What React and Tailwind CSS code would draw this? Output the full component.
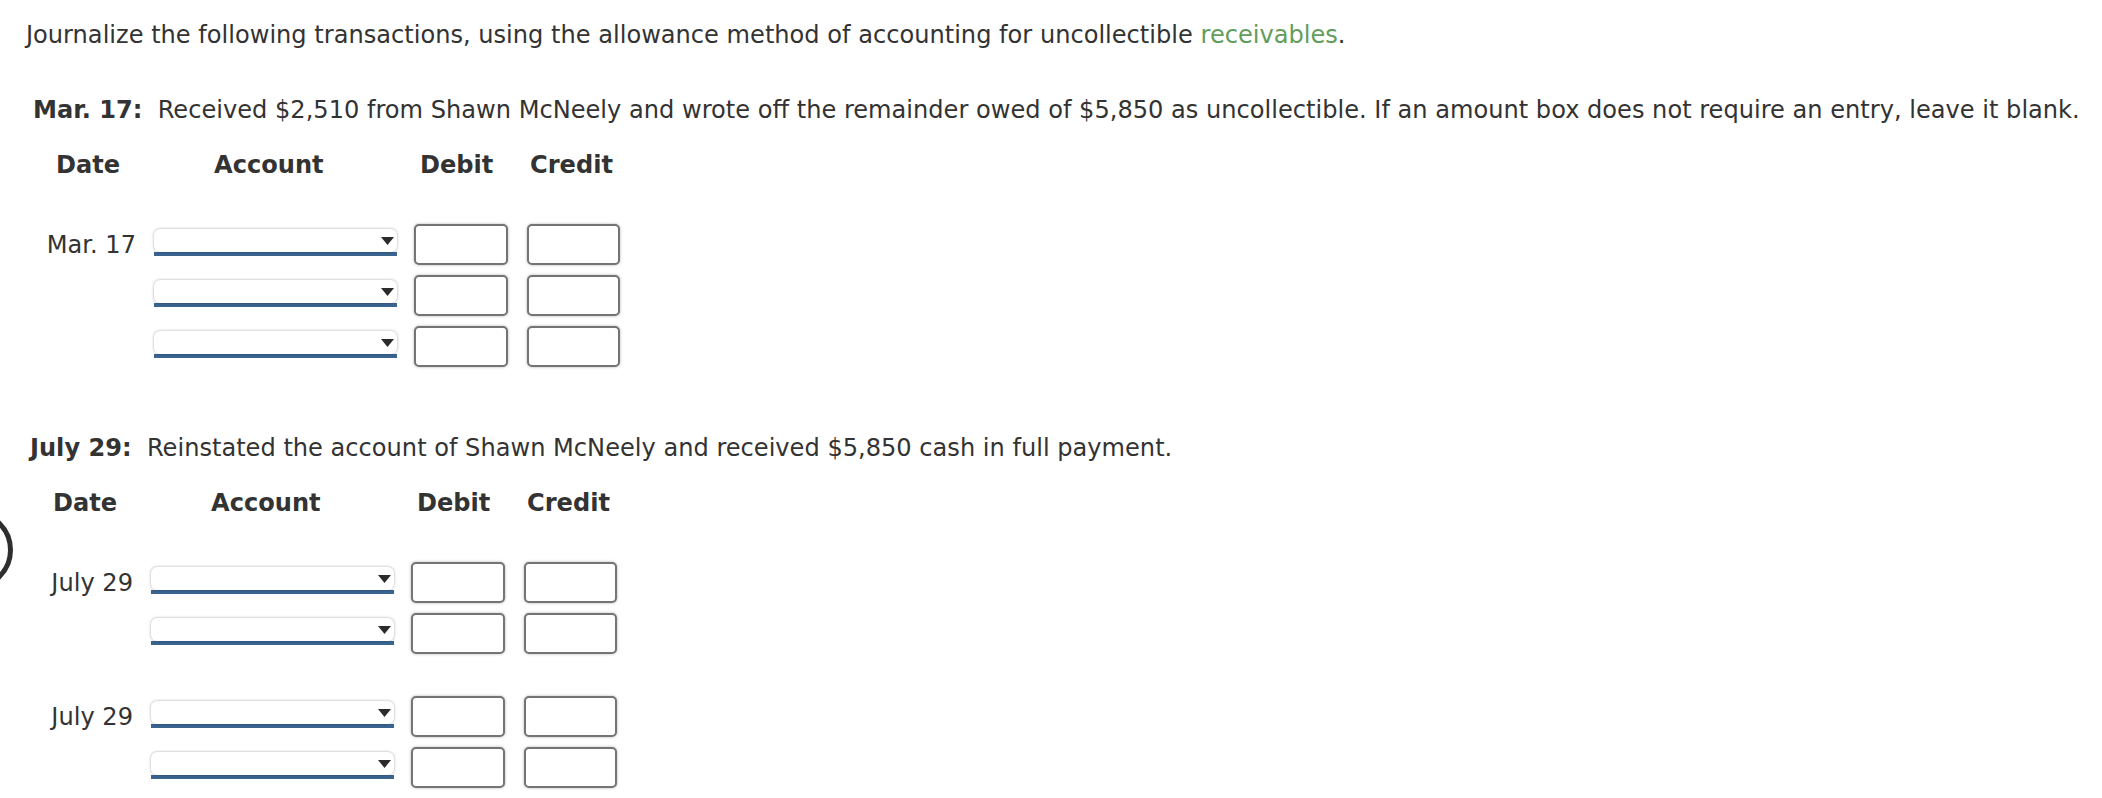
import React from 'react';

const font = "font-['DejaVu_Sans','Verdana',sans-serif]";

const AccountSelect = () => (
  <div className="flex flex-col mt-[5px] self-start">
    <div className="relative h-[23px] rounded-[6px] bg-white shadow-[0_0_3px_rgba(0,0,0,0.35)]">
      <svg className="absolute right-[3px] top-[8px]" width="13" height="8" viewBox="0 0 13 8">
        <path d="M0 0 H13 L6.5 8 Z" fill="#2b2b2b" />
      </svg>
    </div>
    <div className="h-[4px] bg-[#3a6591]" />
  </div>
);

const AmountBox = ({ extra = '' }) => (
  <div className={`h-[41px] rounded-[5px] border-2 border-[#747474] bg-white shadow-[0_0_3px_rgba(0,0,0,0.3)] ${extra}`} />
);

const EntryRow = ({ label }) => (
  <div className="grid grid-cols-[104px_243px_94px_95px] gap-x-[17px] items-center">
    <div className="text-right pr-[1px] whitespace-nowrap">{label}</div>
    <AccountSelect />
    <AmountBox />
    <AmountBox extra="ml-[2px]" />
  </div>
);

const Headers = () => (
  <div className="grid grid-cols-[104px_243px_94px_95px] gap-x-[17px] h-[30px] items-center font-bold whitespace-nowrap">
    <div className="pl-[23px]">Date</div>
    <div className="pl-[60px]">Account</div>
    <div className="pl-[6px]">Debit</div>
    <div className="pl-[5px]">Credit</div>
  </div>
);

const App = () => {
  return (
    <div className={`relative min-h-[798px] w-[2102px] bg-white text-[#333333] text-[24.1px] leading-[30px] ${font}`}>
      <div className="absolute left-[-67px] top-[510px] w-[80px] h-[80px] rounded-full border-[5px] border-[#2e2e2e]" />

      <div className="pt-[20px] pl-[26px] whitespace-nowrap">
        Journalize the following transactions, using the allowance method of accounting for uncollectible{' '}
        <span className="text-[#639d5c]">receivables</span>.
      </div>

      <div className="pl-[33px]">
        <p className="mt-[45px] h-[30px] whitespace-nowrap">
          <span className="font-bold">Mar. 17:</span>&nbsp; Received $2,510 from Shawn McNeely and wrote off the remainder owed of $5,850 as uncollectible. If an amount box does not require an entry, leave it blank.
        </p>
        <div className="mt-[25px]">
          <Headers />
        </div>
        <div className="mt-[44px] flex flex-col gap-[10px]">
          <EntryRow label="Mar. 17" />
          <EntryRow label="" />
          <EntryRow label="" />
        </div>
      </div>

      <div className="pl-[30px]">
        <p className="mt-[66px] h-[30px] whitespace-nowrap">
          <span className="font-bold">July 29:</span>&nbsp; Reinstated the account of Shawn McNeely and received $5,850 cash in full payment.
        </p>
        <div className="mt-[25px]">
          <Headers />
        </div>
        <div className="mt-[44px] flex flex-col gap-[10px]">
          <EntryRow label="July 29" />
          <EntryRow label="" />
        </div>
        <div className="mt-[42px] flex flex-col gap-[10px] pb-[10px]">
          <EntryRow label="July 29" />
          <EntryRow label="" />
        </div>
      </div>
    </div>
  );
};

export default App;
